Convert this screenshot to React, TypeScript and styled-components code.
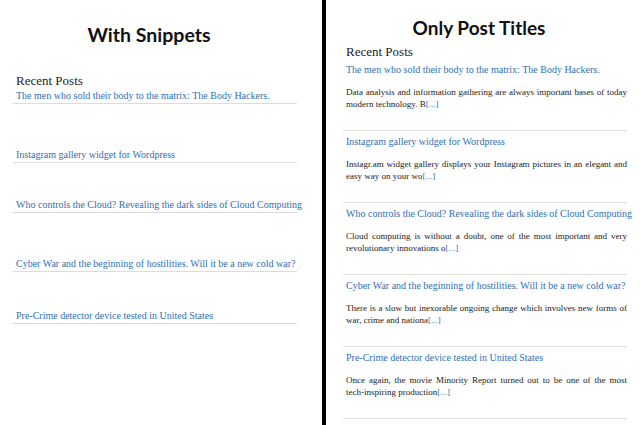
import React from 'react'
import styled, { createGlobalStyle } from 'styled-components'

type Post = { title: string; snippet: string; pad: number }

const posts: Post[] = [
  {
    title: 'The men who sold their body to the matrix: The Body Hackers.',
    snippet: 'Data analysis and information gathering are always important bases of today modern technology. B',
    pad: 0,
  },
  {
    title: 'Instagram gallery widget for Wordpress',
    snippet: 'Instagr.am widget gallery displays your Instagram pictures in an elegant and easy way on your wo',
    pad: 44,
  },
  {
    title: 'Who controls the Cloud? Revealing the dark sides of Cloud Computing',
    snippet: 'Cloud computing is without a doubt, one of the most important and very revolutionary innovations o',
    pad: 35,
  },
  {
    title: 'Cyber War and the beginning of hostilities. Will it be a new cold war?',
    snippet: 'There is a slow but inexorable ongoing change which involves new forms of war, crime and nationa',
    pad: 44,
  },
  {
    title: 'Pre-Crime detector device tested in United States',
    // non-breaking hyphen keeps "tech-inspiring" on one line
    snippet: 'Once again, the movie Minority Report turned out to be one of the most tech\u2011inspiring production',
    pad: 37,
  },
]

const GlobalStyle = createGlobalStyle`
  html, body {
    margin: 0;
    padding: 0;
    background: #ffffff;
  }
`

const Page = styled.div`
  display: flex;
  width: 640px;
  height: 425px;
  overflow: hidden;
  background: #fff;
`

const Panel = styled.div<{ $left: number; $right: number; $width: number }>`
  display: flex;
  flex-direction: column;
  width: ${p => p.$width}px;
  padding: 0 ${p => p.$right}px 0 ${p => p.$left}px;
  box-sizing: border-box;
`

const Divider = styled.div`
  width: 4px;
  flex-shrink: 0;
  background: #000;
`

const Heading = styled.h2<{ $size: number; $top: number }>`
  margin: ${p => p.$top}px 0 0;
  padding-right: 12px;
  text-align: center;
  font-family: Lato, 'Open Sans', sans-serif;
  font-weight: 700;
  font-size: ${p => p.$size}px;
  line-height: 24px;
  color: #111;
`

const WidgetTitle = styled.h3<{ $top: number }>`
  margin: ${p => p.$top}px 0 0 3px;
  font-family: 'Liberation Serif', serif;
  font-weight: 400;
  font-size: 13px;
  line-height: 16px;
  color: #222;
`

const List = styled.ul`
  list-style: none;
  margin: 0;
  padding: 0;
`

const Row = styled.li<{ $pad: number }>`
  padding-top: ${p => p.$pad}px;
  border-bottom: 1px solid #dcdcdc;
`

const PostLink = styled.a`
  display: block;
  padding-left: 3px;
  font-family: 'Liberation Serif', serif;
  font-size: 10px;
  line-height: 14px;
  color: #2f6fb0;
  text-decoration: none;
  white-space: nowrap;
`

const Card = styled.li`
  padding: 3px 0 20px;
  border-bottom: 1px solid #dcdcdc;
  & + & {
    padding-top: 4px;
  }
`

const Snippet = styled.p`
  margin: 9px 0 0 3px;
  font-family: 'Liberation Serif', serif;
  font-size: 9px;
  line-height: 12px;
  color: #222;
  text-align: justify;
`

const More = styled.span`
  color: #2f6fb0;
`

export default function App() {
  return (
    <>
      <GlobalStyle />
      <Page>
        <Panel $left={13} $right={25} $width={322}>
          <Heading $size={19.5} $top={23}>With Snippets</Heading>
          <WidgetTitle $top={26}>Recent Posts</WidgetTitle>
          <List>
            {posts.map(p => (
              <Row key={p.title} $pad={p.pad}>
                <PostLink href="#">{p.title}</PostLink>
              </Row>
            ))}
          </List>
        </Panel>
        <Divider />
        <Panel $left={17} $right={13} $width={314}>
          <Heading $size={19} $top={16}>Only Post Titles</Heading>
          <WidgetTitle $top={4}>Recent Posts</WidgetTitle>
          <List>
            {posts.map(p => (
              <Card key={p.title}>
                <PostLink href="#">{p.title}</PostLink>
                <Snippet>
                  {p.snippet}
                  <More>[...]</More>
                </Snippet>
              </Card>
            ))}
          </List>
        </Panel>
      </Page>
    </>
  )
}
